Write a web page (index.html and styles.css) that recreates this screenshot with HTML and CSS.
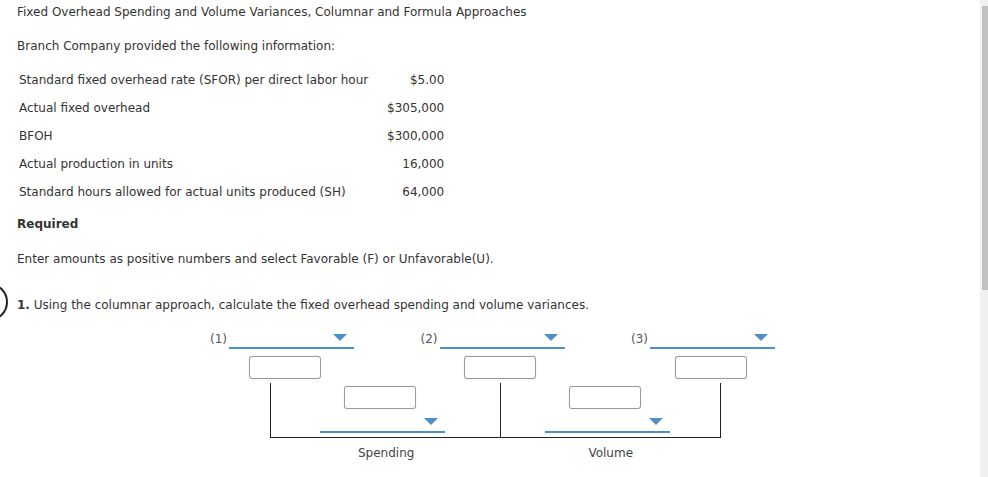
FILE: index.html
```html
<!DOCTYPE html>
<html>
<head>
<meta charset="utf-8">
<link rel="stylesheet" href="styles.css">
</head>
<body>
<div class="page">
  <div class="intro">
    <p class="title">Fixed Overhead Spending and Volume Variances, Columnar and Formula Approaches</p>
    <p class="lead">Branch Company provided the following information:</p>
    <table class="data">
      <tr><td>Standard fixed overhead rate (SFOR) per direct labor hour</td><td class="num">$5.00</td></tr>
      <tr><td>Actual fixed overhead</td><td class="num">$305,000</td></tr>
      <tr><td>BFOH</td><td class="num">$300,000</td></tr>
      <tr><td>Actual production in units</td><td class="num">16,000</td></tr>
      <tr><td>Standard hours allowed for actual units produced (SH)</td><td class="num">64,000</td></tr>
    </table>
    <p class="required">Required</p>
    <p class="note">Enter amounts as positive numbers and select Favorable (F) or Unfavorable(U).</p>
    <p class="question"><b>1.</b> Using the columnar approach, calculate the fixed overhead spending and volume variances.</p>
  </div>
  <span class="ring"></span>

  <div class="diagram">
    <div class="heads">
      <div class="head"><span class="num-label">(1)</span><span class="dropdown"><span class="tri"></span></span></div>
      <div class="head"><span class="num-label">(2)</span><span class="dropdown"><span class="tri"></span></span></div>
      <div class="head"><span class="num-label">(3)</span><span class="dropdown"><span class="tri"></span></span></div>
    </div>
    <div class="boxes">
      <input class="box b1" type="text">
      <input class="box b2" type="text">
      <input class="box b3" type="text">
    </div>
    <div class="bracket">
      <div class="cell left">
        <input class="box inner" type="text">
        <span class="dropdown"><span class="tri"></span></span>
      </div>
      <div class="cell right">
        <input class="box inner" type="text">
        <span class="dropdown"><span class="tri"></span></span>
      </div>
    </div>
    <div class="labels">
      <span class="lbl spend">Spending</span>
      <span class="lbl vol">Volume</span>
    </div>
  </div>
</div>
<div class="scrollbar"><div class="thumb"></div></div>
</body>
</html>
```

FILE: styles.css
```css
html, body {
  margin: 0;
  padding: 0;
  background: #ffffff;
}
body {
  font-family: "DejaVu Sans", Verdana, sans-serif;
  font-size: 12px;
  line-height: 16px;
  color: #333333;
  width: 988px;
  height: 477px;
  overflow: hidden;
  position: relative;
}
.page {
  position: relative;
}
.intro {
  padding-left: 17px;
}
.intro p {
  margin: 0;
}
.title {
  padding-top: 4px;
}
.lead {
  margin-top: 18px !important;
}
.data {
  border-collapse: collapse;
  margin-top: 12px;
  margin-left: -1px;
}
.data td {
  height: 28px;
  padding: 0 3px;
  vertical-align: middle;
}
.data td.num {
  text-align: right;
  padding-left: 13px;
  width: 60px;
}
.required {
  font-weight: bold;
  margin-top: 10px !important;
}
.note {
  margin-top: 19px !important;
}
.question {
  margin-top: 30px !important;
}
.ring {
  position: absolute;
  left: -30px;
  top: 283px;
  width: 34px;
  height: 34px;
  border: 2.5px solid #222;
  border-radius: 50%;
}
.diagram {
  margin-top: 18px;
}
.heads {
  display: flex;
  padding-left: 210px;
  gap: 66.5px;
}
.head {
  display: flex;
  align-items: flex-start;
}
.num-label {
  width: 19px;
  color: #555;
}
.dropdown {
  position: relative;
  display: block;
  width: 125px;
  height: 16px;
  border-bottom: 2px solid #4d8fc9;
}
.tri {
  position: absolute;
  right: 7px;
  top: 3px;
  width: 0;
  height: 0;
  border-left: 7px solid transparent;
  border-right: 7px solid transparent;
  border-top: 7px solid #4d8fc9;
}
.boxes {
  display: flex;
  margin-top: 7px;
  padding-left: 249px;
}
.box {
  box-sizing: border-box;
  width: 72px;
  height: 23px;
  margin: 0;
  padding: 0;
  border: 1px solid #9a9a9a;
  border-radius: 3px;
  background: #fff;
  box-shadow: 0 0 1px rgba(0,0,0,0.25);
  display: block;
}
.b2 { margin-left: 143px; }
.b3 { margin-left: 139px; }
.bracket {
  display: flex;
  margin-top: 4px;
  margin-left: 270px;
  width: 451px;
  box-sizing: border-box;
  border: 1px solid #222;
  border-top: 0;
}
.cell {
  display: flex;
  flex-direction: column;
  padding-top: 3px;
  padding-bottom: 4px;
}
.cell.left {
  width: 229px;
  border-right: 1px solid #222;
}
.cell.right {
  flex: 1;
}
.cell.left .inner { margin-left: 73px; }
.cell.left .dropdown { margin-left: 49px; }
.cell.right .inner { margin-left: 68px; }
.cell.right .dropdown { margin-left: 44px; }
.cell .dropdown { margin-top: 6px; }
.labels {
  display: flex;
  margin-top: 7px;
}
.lbl {
  color: #444;
}
.spend { margin-left: 358px; }
.vol { margin-left: 174px; }
.scrollbar {
  position: fixed;
  top: 0;
  right: 0;
  width: 8px;
  height: 477px;
  background: #f0f0f0;
}
.thumb {
  margin-top: 6px;
  margin-left: 2px;
  width: 6px;
  height: 284px;
  background: #c1c1c1;
}
```
